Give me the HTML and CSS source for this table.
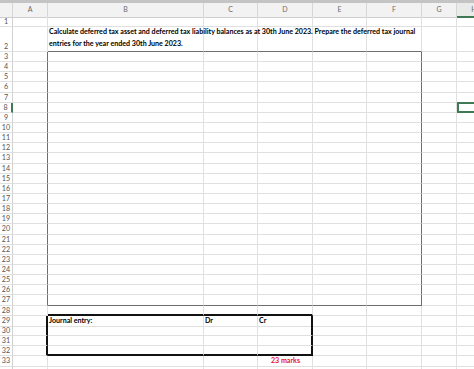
FILE: index.html
```html
<!DOCTYPE html>
<html lang="en">
<head>
<meta charset="utf-8">
<title>Deferred tax worksheet</title>
<link rel="stylesheet" href="styles.css">
</head>
<body>
<div class="topbar"></div>
<div class="sheet">
  <div class="row hdr"><span></span><span>A</span><span>B</span><span>C</span><span>D</span><span>E</span><span>F</span><span>G</span><span class="on">H</span></div>
  <div class="row r1"><span class="rh">1</span><span></span><span></span><span></span><span></span><span></span><span></span><span></span><span></span></div>
  <div class="row r2"><span class="rh">2</span><span></span><span class="xb"><p class="q">Calculate deferred tax asset and deferred tax liability balances as at 30th June 2023. Prepare the deferred tax journal entries for the year ended 30th June 2023.</p></span><span class="xb"></span><span class="xb"></span><span class="xb"></span><span class="xb"></span><span></span><span></span></div>
  <div class="row"><span class="rh">3</span><span class="xr"></span><span></span><span></span><span></span><span></span><span class="xr"></span><span></span><span></span></div>
  <div class="row"><span class="rh">4</span><span class="xr"></span><span></span><span></span><span></span><span></span><span class="xr"></span><span></span><span></span></div>
  <div class="row"><span class="rh">5</span><span class="xr"></span><span></span><span></span><span></span><span></span><span class="xr"></span><span></span><span></span></div>
  <div class="row"><span class="rh">6</span><span class="xr"></span><span></span><span></span><span></span><span></span><span class="xr"></span><span></span><span></span></div>
  <div class="row"><span class="rh">7</span><span class="xr"></span><span></span><span></span><span></span><span></span><span class="xr"></span><span></span><span></span></div>
  <div class="row"><span class="rh on">8</span><span class="xr"></span><span></span><span></span><span></span><span></span><span class="xr"></span><span></span><span class="sel"></span></div>
  <div class="row"><span class="rh">9</span><span class="xr"></span><span></span><span></span><span></span><span></span><span class="xr"></span><span></span><span></span></div>
  <div class="row"><span class="rh">10</span><span class="xr"></span><span></span><span></span><span></span><span></span><span class="xr"></span><span></span><span></span></div>
  <div class="row"><span class="rh">11</span><span class="xr"></span><span></span><span></span><span></span><span></span><span class="xr"></span><span></span><span></span></div>
  <div class="row"><span class="rh">12</span><span class="xr"></span><span></span><span></span><span></span><span></span><span class="xr"></span><span></span><span></span></div>
  <div class="row"><span class="rh">13</span><span class="xr"></span><span></span><span></span><span></span><span></span><span class="xr"></span><span></span><span></span></div>
  <div class="row"><span class="rh">14</span><span class="xr"></span><span></span><span></span><span></span><span></span><span class="xr"></span><span></span><span></span></div>
  <div class="row"><span class="rh">15</span><span class="xr"></span><span></span><span></span><span></span><span></span><span class="xr"></span><span></span><span></span></div>
  <div class="row"><span class="rh">16</span><span class="xr"></span><span></span><span></span><span></span><span></span><span class="xr"></span><span></span><span></span></div>
  <div class="row"><span class="rh">17</span><span class="xr"></span><span></span><span></span><span></span><span></span><span class="xr"></span><span></span><span></span></div>
  <div class="row"><span class="rh">18</span><span class="xr"></span><span></span><span></span><span></span><span></span><span class="xr"></span><span></span><span></span></div>
  <div class="row"><span class="rh">19</span><span class="xr"></span><span></span><span></span><span></span><span></span><span class="xr"></span><span></span><span></span></div>
  <div class="row"><span class="rh">20</span><span class="xr"></span><span></span><span></span><span></span><span></span><span class="xr"></span><span></span><span></span></div>
  <div class="row"><span class="rh">21</span><span class="xr"></span><span></span><span></span><span></span><span></span><span class="xr"></span><span></span><span></span></div>
  <div class="row"><span class="rh">22</span><span class="xr"></span><span></span><span></span><span></span><span></span><span class="xr"></span><span></span><span></span></div>
  <div class="row"><span class="rh">23</span><span class="xr"></span><span></span><span></span><span></span><span></span><span class="xr"></span><span></span><span></span></div>
  <div class="row"><span class="rh">24</span><span class="xr"></span><span></span><span></span><span></span><span></span><span class="xr"></span><span></span><span></span></div>
  <div class="row"><span class="rh">25</span><span class="xr"></span><span></span><span></span><span></span><span></span><span class="xr"></span><span></span><span></span></div>
  <div class="row"><span class="rh">26</span><span class="xr"></span><span></span><span></span><span></span><span></span><span class="xr"></span><span></span><span></span></div>
  <div class="row"><span class="rh">27</span><span class="xr"></span><span class="xb"></span><span class="xb"></span><span class="xb"></span><span class="xb"></span><span class="xr xb"></span><span></span><span></span></div>
  <div class="row"><span class="rh">28</span><span></span><span class="jb"></span><span class="jb"></span><span class="jb"></span><span></span><span></span><span></span><span></span></div>
  <div class="row"><span class="rh">29</span><span class="jr"></span><span class="t">Journal entry:</span><span class="t">Dr</span><span class="t jr">Cr</span><span></span><span></span><span></span><span></span></div>
  <div class="row"><span class="rh">30</span><span class="jr"></span><span></span><span></span><span class="jr"></span><span></span><span></span><span></span><span></span></div>
  <div class="row"><span class="rh">31</span><span class="jr"></span><span></span><span></span><span class="jr"></span><span></span><span></span><span></span><span></span></div>
  <div class="row"><span class="rh">32</span><span class="jr"></span><span class="jb"></span><span class="jb"></span><span class="jr jb"></span><span></span><span></span><span></span><span></span></div>
  <div class="row"><span class="rh">33</span><span></span><span></span><span></span><span class="t marks">23 marks</span><span></span><span></span><span></span><span></span></div>
  <div class="row"><span class="rh"></span><span></span><span></span><span></span><span></span><span></span><span></span><span></span><span></span></div>
</div>
</body>
</html>
```

FILE: styles.css
```css
* {
  box-sizing: border-box;
  margin: 0;
  padding: 0;
}

html, body {
  width: 474px;
  height: 369px;
  overflow: hidden;
  background: #ffffff;
}

body {
  font-family: Lato, "Liberation Sans", sans-serif;
  color: #000;
}

.topbar {
  height: 3px;
  background: #c4c4c4;
}

.row {
  display: grid;
  grid-template-columns: 13px 35px 156px 54px 55px 54px 55px 35px 35px;
  height: 10.15px;
}

.row > span {
  display: block;
  min-width: 0;
  border-right: 1px solid #e0e0e0;
  border-bottom: 1px solid #e0e0e0;
}

.hdr {
  height: 14px;
  background: #f2f2f2;
}

.hdr > span {
  font-size: 7px;
  line-height: 13px;
  text-align: center;
  color: #6a6a6a;
  border-right-color: #d6d6d6;
  border-bottom-color: #cdcdcd;
}

.hdr > span.on {
  border-bottom: 2px solid #3f7a55;
  background: #e8ebe8;
}

.r1 { height: 10px; }
.r2 { height: 25px; }

.row > .rh {
  font-size: 7.2px;
  line-height: 10px;
  color: #555555;
  text-align: center;
  border-right-color: #d2d2d2;
  white-space: nowrap;
  overflow: hidden;
}

.r2 > .rh {
  display: flex;
  align-items: flex-end;
  justify-content: center;
  line-height: 9px;
}

.row > .rh.on {
  border-right: 2px solid #3f7a55;
}

.q {
  width: 372px;
  margin-top: -1px;
  padding-left: 1px;
  font-size: 7.1px;
  font-weight: 700;
  line-height: 11.5px;
  position: relative;
}

.t {
  font-size: 7.1px;
  font-weight: 700;
  line-height: 10px;
  padding-left: 1px;
  white-space: nowrap;
}

.marks {
  color: #e3132f;
  text-align: center;
}

.row > .xr { border-right: 1px solid #6e6e6e; }
.row > .xb { border-bottom: 1px solid #6e6e6e; }
.row > .jr { border-right: 2px solid #111111; }
.row > .jb { border-bottom: 2px solid #111111; }

.row > .sel {
  border: 2px solid #3f7a55;
  border-right: none;
  margin-top: -1px;
}
```
